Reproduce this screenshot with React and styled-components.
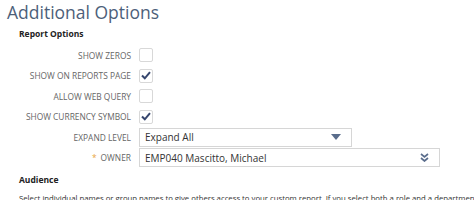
import styled, { createGlobalStyle } from "styled-components";

const Global = createGlobalStyle`
  body {
    margin: 0;
    background: #fff;
    font-family: "Open Sans", "Liberation Sans", sans-serif;
    overflow: hidden;
  }
`;

const Page = styled.div`
  width: 474px;
  height: 200px;
  overflow: hidden;
  white-space: nowrap;
`;

const Title = styled.h1`
  margin: 0;
  padding: 0 0 0 7px;
  font-size: 17.5px;
  font-weight: 400;
  line-height: 24px;
  color: #4d5f7a;
`;

const Section = styled.h2`
  margin: 0;
  padding-left: 19px;
  font-size: 8.5px;
  font-weight: 700;
  color: #222;
  line-height: 14px;
`;

const Rows = styled.div`
  display: flex;
  flex-direction: column;
  margin-top: 4px;
`;

const Row = styled.div`
  display: flex;
  align-items: center;
  height: 20.5px;
`;

const Label = styled.div`
  width: 131px;
  text-align: right;
  font-size: 8.4px;
  color: #666;
  padding-right: 8px;
  box-sizing: content-box;
`;

const Star = styled.span`
  color: #e8a33c;
  margin-right: 4px;
`;

const Check = styled.div`
  width: 12px;
  height: 12px;
  border: 1px solid #d8d8d8;
  border-radius: 2px;
  display: flex;
  align-items: center;
  justify-content: center;
`;

const Select = styled.div`
  width: ${(p) => p.$w}px;
  height: 19px;
  box-sizing: border-box;
  border: 1px solid #d6d6d6;
  display: flex;
  align-items: center;
  justify-content: space-between;
  padding: 0 10px 0 5px;
  font-size: 10px;
  color: #333;
`;

const Text = styled.p`
  margin: 0;
  padding-left: 19px;
  font-size: 7.75px;
  color: #333;
  line-height: 14px;
`;

const Tick = () => (
  <svg width="10" height="9" viewBox="0 0 10 9">
    <path d="M1 4.5 L3.8 7.3 L9 1.2" fill="none" stroke="#36466e" strokeWidth="2" />
  </svg>
);

const Caret = () => (
  <svg width="10" height="6" viewBox="0 0 10 6">
    <path d="M0 0 H10 L5 6 Z" fill="#5a6d8c" />
  </svg>
);

const DoubleCaret = () => (
  <svg width="9" height="9" viewBox="0 0 9 9">
    <path d="M1 1 L4.5 4 L8 1 M1 5 L4.5 8 L8 5" fill="none" stroke="#5a6d8c" strokeWidth="1.7" />
  </svg>
);

const checks = [
  ["SHOW ZEROS", false],
  ["SHOW ON REPORTS PAGE", true],
  ["ALLOW WEB QUERY", false],
  ["SHOW CURRENCY SYMBOL", true],
];

export default function App() {
  return (
    <Page>
      <Global />
      <Title>Additional Options</Title>
      <Section style={{ marginTop: 3 }}>Report Options</Section>
      <Rows>
        {checks.map(([label, on]) => (
          <Row key={label}>
            <Label>{label}</Label>
            <Check>{on && <Tick />}</Check>
          </Row>
        ))}
        <Row>
          <Label>EXPAND LEVEL</Label>
          <Select $w={213}>
            Expand All
            <Caret />
          </Select>
        </Row>
        <Row>
          <Label>
            <Star>*</Star>OWNER
          </Label>
          <Select $w={301}>
            EMP040 Mascitto, Michael
            <DoubleCaret />
          </Select>
        </Row>
      </Rows>
      <Section style={{ marginTop: 5 }}>Audience</Section>
      <Text style={{ marginTop: 4 }}>
        Select individual names or group names to give others access to your custom report. If you select both a role and a department, the
      </Text>
    </Page>
  );
}
